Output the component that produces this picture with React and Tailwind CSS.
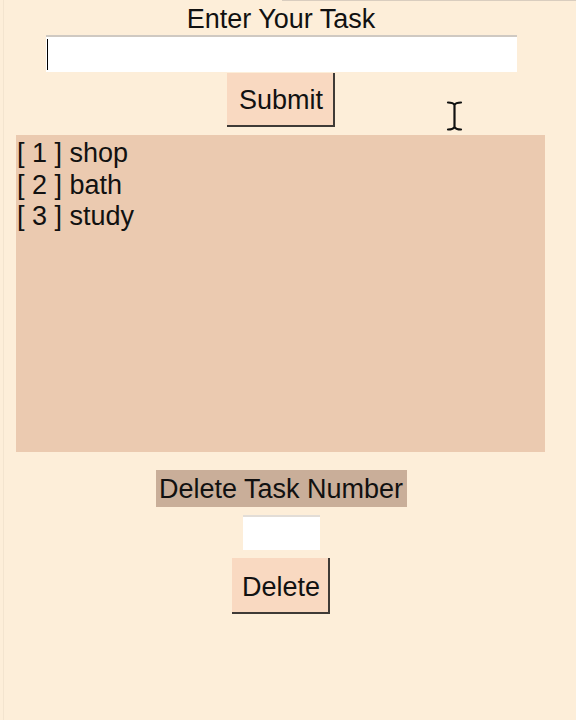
import React from "react";

const font = { fontFamily: '"Liberation Sans", Arial, sans-serif' };

export default function App() {
  return (
    <div className="relative w-[576px] h-[720px] bg-[#fdeed9] overflow-hidden text-[#111]" style={font}>
      <div className="absolute left-[282px] top-0 right-0 h-px bg-[#d9cdbf]" />
      <div className="absolute left-[3px] top-0 bottom-0 w-px bg-[#f3e4cf]" />
      <div className="w-[562px] flex flex-col items-center pt-1">
        <div className="text-[27px] leading-[31px]">Enter Your Task</div>
        <div className="w-[471px] h-[37px] bg-white border-t-2 border-[#cfc9c2] flex items-center pl-px">
          <div className="w-[1.5px] h-[31px] bg-black" />
        </div>
        <button className="mt-px w-[108px] h-[54px] bg-[#f9d9c1] border-r-2 border-b-2 border-[#3f3a36] text-[27px] leading-[31px] flex items-center justify-center pl-0.5 pt-0.5">
          Submit
        </button>
        <div className="mt-2 self-start ml-4 w-[529px] h-[317px] bg-[#ebcab0] pt-[3px] pl-px text-[27px] leading-[31.5px]">
          <div>[ 1 ] shop</div>
          <div>[ 2 ] bath</div>
          <div>[ 3 ] study</div>
        </div>
        <div className="mt-[18px] h-[37px] w-[251px] bg-[#c9ae99] text-[27px] leading-[31px] flex items-center justify-center pt-px">
          Delete Task Number
        </div>
        <div className="mt-2 w-[77px] h-[35px] bg-white border-t-2 border-[#e2ddd7]" />
        <button className="mt-2 w-[98px] h-[56px] bg-[#f9d9c1] border-r-2 border-b-2 border-[#3f3a36] text-[27px] leading-[31px] flex items-center justify-center pl-0.5 pt-1">
          Delete
        </button>
      </div>
      <svg className="absolute left-[446px] top-[101px]" width="18" height="30" viewBox="0 0 18 30" fill="none">
        <path d="M2 1.5 C5 1.5 7.5 2 8.5 4 C9.5 2 12 1.5 15 1.5 M8.5 4 V26 M2 28.5 C5 28.5 7.5 28 8.5 26 C9.5 28 12 28.5 15 28.5" stroke="#111" strokeWidth="2.2" strokeLinecap="round" />
      </svg>
    </div>
  );
}
